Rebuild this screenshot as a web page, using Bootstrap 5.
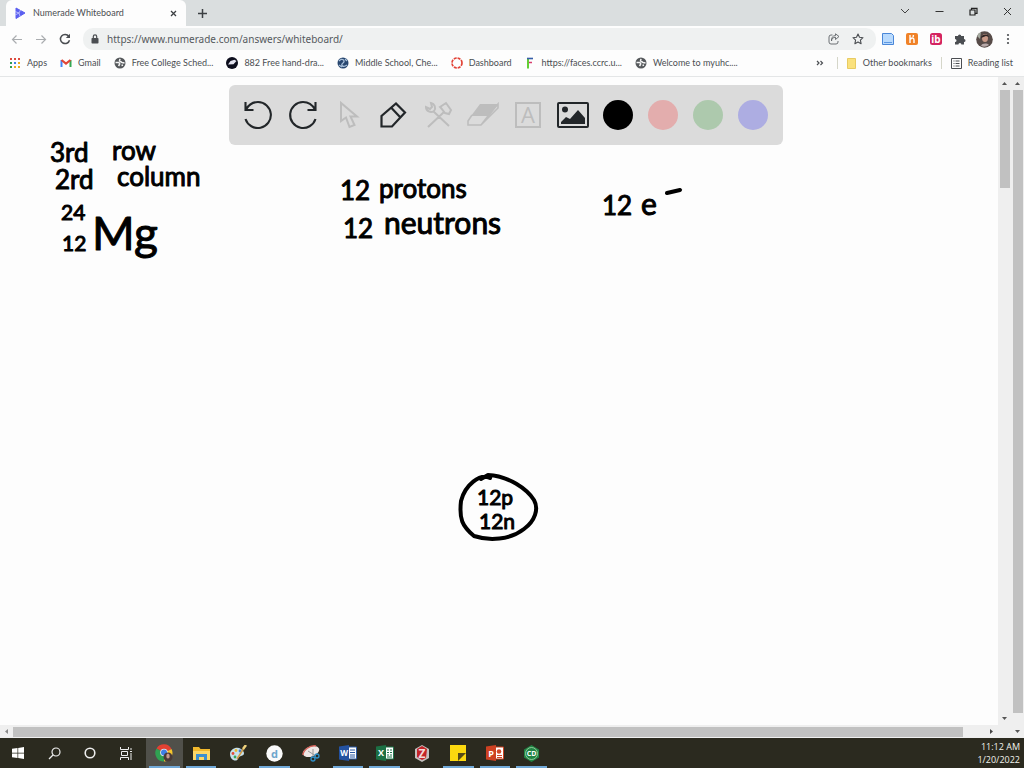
<!DOCTYPE html>
<html lang="en">
<head>
<meta charset="utf-8">
<meta name="viewport" content="width=device-width, initial-scale=1">
<title>Numerade Whiteboard</title>
<link href="https://cdn.jsdelivr.net/npm/bootstrap@5.3.0/dist/css/bootstrap.min.css" rel="stylesheet">
<style>
body{font-family:"Noto Sans","Open Sans",sans-serif;font-size:9px;line-height:12px;color:#4b4e52;background:#fdfdfd;overflow:hidden}
button{border:0;background:none;padding:0;color:inherit;display:inline-flex;align-items:center;justify-content:center}
svg{display:block;flex:none}
.tabstrip{height:26px;background:#dadedf}
.page-tab{width:180px;margin-left:6px;padding:0 8px;background:#fdfdfd;border-radius:6px 6px 0 0}
.page-tab span{font-family:Lato,sans-serif;margin-left:7px}
.win-btn{width:34px}
.new-tab{width:32px}
.addressbar{height:26px;padding:0 4px 0 5px}
.tool-btn{width:24px;height:24px}
.urlbox{background:#eff1f1;border-radius:10px;height:22px;padding:0 6px 0 8px;margin-left:6px}
.urlbox input{font-family:"Noto Sans",sans-serif;font-size:10px;line-height:16px;color:#55595d;background:none;border:0;outline:0;padding:0;min-width:0}
.bookmarks{height:25px;padding:0 11px 2px 9px;gap:13px;border-bottom:1px solid #e4e6e7}
.bookmarks a{color:#4b4e52;text-decoration:none;display:flex;align-items:center;gap:6px;white-space:nowrap;font-family:Lato,sans-serif}
.bookmark-end{gap:9px}
.divide{width:1px;height:12px;background:#d5d6c9}
.board{min-height:0}
.palette{top:8px;left:50%;translate:-50% 0;width:554px;height:60px;padding:0 7px;background:#dbdbdb;border-radius:6px;color:#222629}
.palette button{flex:1 1 0;height:60px}
.palette .off{color:#bdbdbd}
.swatch{width:30px;height:30px;border-radius:50%}
.ink text{font-family:Lato,sans-serif;font-size:26px;fill:#000;stroke:#000;stroke-width:1;stroke-linejoin:round}
.ink .note{font-size:21px}
.ink .wide{font-size:30px}
.ink .symbol{font-size:46px}
.vbar{width:13px;background:#efefef;color:#555}
.vbar i{width:10px;background:#c1c1c1}
.hbar{height:13px;background:#efefef;color:#555}
.hbar i{height:10px;background:#c1c1c1}
.arrow{width:13px;height:13px;flex:none}
.taskbar{height:30px;background:#2b2a1f;color:#fff;line-height:13px}
.sys button{width:36px;height:30px}
.apps{width:404px;margin-left:2px}
.apps button{flex:1 1 0;height:30px;position:relative}
.apps .open::after{content:"";position:absolute;left:3px;right:3px;bottom:0;height:2px;background:#71a9d8}
.apps .active{background:#50504a}
.apps text{font-family:"Open Sans",sans-serif;font-weight:700}
.clock{font-family:"Open Sans",sans-serif;font-size:9px;color:#f2f2ec}
</style>
</head>
<body class="d-flex flex-column vh-100">
<svg width="0" height="0" class="position-absolute" aria-hidden="true">
 <symbol id="globe" viewBox="0 0 12 12"><circle cx="6" cy="6" r="5.500" fill="#55585b"/><path d="M1.500 5.500H4c1.500 0 2 1 1.500 2L4.500 9M6 1.800 5.500 4 8 5.500l2.500.5M7.500 8.500 9 8" stroke="#f4f4f4" stroke-width="1.500" fill="none"/></symbol>
 <symbol id="up" viewBox="0 0 13 13"><path d="M4 8 6.500 5 9 8z" fill="currentColor"/></symbol>
 <symbol id="down" viewBox="0 0 13 13"><path d="M4 5h5L6.500 8z" fill="currentColor"/></symbol>
</svg>

<header>
 <div class="tabstrip d-flex align-items-stretch">
  <div class="page-tab d-flex align-items-center">
   <svg width="12" height="12" viewBox="0 0 12 12"><path d="M2 1 11 6 2 11.500z" fill="#5a5ff0" stroke="#5a5ff0" stroke-linejoin="round"/><path d="M1 4.500 5 6 6.500 3M5 6l1 3.500M5 6l-4 2" stroke="#c9cbff" stroke-width=".8" fill="none"/></svg>
   <span class="flex-grow-1 text-nowrap">Numerade Whiteboard</span>
   <button aria-label="Close tab"><svg width="9" height="9" viewBox="0 0 9 9"><path d="M2 2l5 5M7 2 2 7" stroke="#3c4043" stroke-width="1.300"/></svg></button>
  </div>
  <button class="new-tab" aria-label="New tab"><svg width="11" height="11" viewBox="0 0 11 11"><path d="M5.500 1v9M1 5.500h9" stroke="#3c4043" stroke-width="1.500"/></svg></button>
  <div class="ms-auto d-flex pb-1">
   <button class="win-btn" aria-label="Search tabs"><svg width="10" height="8" viewBox="0 0 10 8"><path d="M1 2l4 4 4-4" stroke="#444" fill="none"/></svg></button>
   <button class="win-btn" aria-label="Minimize"><svg width="9" height="9" viewBox="0 0 9 9"><path d="M.5 4.500h8" stroke="#333"/></svg></button>
   <button class="win-btn" aria-label="Restore"><svg width="9" height="9" viewBox="0 0 9 9"><path d="M1 3h5v5H1zM2.500 3V1.300H8v5H6" stroke="#222" fill="none" stroke-width="1.200"/></svg></button>
   <button class="win-btn" aria-label="Close"><svg width="9" height="9" viewBox="0 0 9 9"><path d="M1 1l7 7M8 1 1 8" stroke="#333"/></svg></button>
  </div>
 </div>

 <div class="addressbar d-flex align-items-center">
  <button class="tool-btn" aria-label="Back"><svg width="12" height="11" viewBox="0 0 12 11"><path d="M11 5.500H1.500M5.500 1.500l-4 4 4 4" stroke="#aaadb0" fill="none" stroke-width="1.200"/></svg></button>
  <button class="tool-btn" aria-label="Forward"><svg width="12" height="11" viewBox="0 0 12 11"><path d="M1 5.500h9.500M6.500 1.500l4 4-4 4" stroke="#aaadb0" fill="none" stroke-width="1.200"/></svg></button>
  <button class="tool-btn" aria-label="Reload"><svg width="12" height="12" viewBox="0 0 12 12"><path d="M9.800 3.300A4.600 4.600 0 1 0 10.500 7.200" stroke="#4b4e52" fill="none" stroke-width="1.500"/><path d="M11 .8V5H6.800z" fill="#4b4e52"/></svg></button>
  <div class="urlbox d-flex align-items-center flex-grow-1">
   <svg width="8" height="10" viewBox="0 0 8 10"><rect x=".5" y="4" width="7" height="5.500" rx=".8" fill="#4b4e52"/><path d="M2.300 4V2.500a1.700 1.700 0 0 1 3.400 0V4" stroke="#4b4e52" fill="none" stroke-width="1.200"/></svg>
   <input class="flex-grow-1 ms-2" type="text" aria-label="Address" value="https://www.numerade.com/answers/whiteboard/">
   <button class="tool-btn" aria-label="Share"><svg width="12" height="12" viewBox="0 0 12 12"><path d="M4.500 2H3a2 2 0 0 0-2 2v5a2 2 0 0 0 2 2h5a2 2 0 0 0 2-2V8M3.500 8c.3-2.500 1.700-3.700 4-3.800V6.500L11 3.500 7.500.8v1.700C4.500 2.700 3.200 5 3.500 8z" stroke="#5f6368" fill="none" stroke-width=".9"/></svg></button>
   <button class="tool-btn" aria-label="Bookmark"><svg width="12" height="12" viewBox="0 0 12 12"><path d="M6 1l1.500 3.300 3.500.4-2.600 2.400.7 3.600L6 8.900l-3.100 1.800.7-3.600L1 4.700l3.500-.4z" stroke="#4b4e52" fill="none" stroke-width="1.100" stroke-linejoin="round"/></svg></button>
  </div>
  <div class="d-flex">
   <button class="tool-btn" aria-label="Docs"><svg width="12" height="12" viewBox="0 0 12 12"><path d="M.5.500h9l2 2v9H.5z" fill="#b9dafd" stroke="#4a87d8"/><path d="M2 9.500h8" stroke="#5d98e3"/></svg></button>
   <button class="tool-btn" aria-label="Honey"><svg width="12" height="12" viewBox="0 0 12 12"><rect width="12" height="12" rx="2" fill="#f08228"/><path d="M4 2v8M4.500 6.500C5 4.500 8 4.500 8 7v3M7.500 2 7 4" stroke="#fff" stroke-width="1.400" fill="none"/></svg></button>
   <button class="tool-btn" aria-label="ib"><svg width="12" height="12" viewBox="0 0 12 12"><rect width="12" height="12" rx="2.500" fill="#d42460"/><text x="6" y="9.500" text-anchor="middle" font-size="10" font-weight="700" fill="#fff">ib</text></svg></button>
   <button class="tool-btn" aria-label="Extensions"><svg width="12" height="12" viewBox="0 0 12 12"><path d="M1 3h3a1.600 1.600 0 0 1 3.200 0H10v3a1.500 1.500 0 0 1 0 3v2.500H7.400a1.500 1.500 0 0 0-3 0H1V9a1.500 1.500 0 0 0 0-3z" fill="#4b4e52"/></svg></button>
   <button class="tool-btn" aria-label="Profile"><svg width="17" height="17" viewBox="0 0 17 17"><circle cx="8.500" cy="8.500" r="8.300" fill="#574b48"/><path d="M1 5a8 8 0 0 1 4-4L4 8z" fill="#a5aaa0"/><ellipse cx="9" cy="7" rx="3" ry="4" fill="#c99a88"/><path d="M5 7c0-4 7-5 8-1l-3-1z" fill="#2f2524"/><path d="M5 15c1-3 6-3 8-1a8 8 0 0 1-8 1z" fill="#b7a8a8"/></svg></button>
   <button class="tool-btn" aria-label="Menu"><svg width="4" height="12" viewBox="0 0 4 12" fill="#4b4e52"><circle cx="2" cy="2" r="1.100"/><circle cx="2" cy="6" r="1.100"/><circle cx="2" cy="10" r="1.100"/></svg></button>
  </div>
 </div>

 <nav class="bookmarks d-flex align-items-center" aria-label="Bookmarks">
  <a href="#"><svg width="12" height="12" viewBox="0 0 12 12"><g fill="#dd4b3e"><path d="M1 1h2v2H1zM5 1h2v2H5zM9 1h2v2H9z"/></g><path d="M1 5h2v2H1zM1 9h2v2H1z" fill="#2f9e53"/><path d="M5 5h2v2H5z" fill="#3f7ee8"/><path d="M9 5h2v2H9zM9 9h2v2H9zM5 9h2v2H5z" fill="#e9ad22"/></svg>Apps</a>
  <a href="#"><svg width="12" height="10" viewBox="0 0 12 10"><path d="M1.500 9V2" stroke="#4285f4" stroke-width="2"/><path d="M10.500 9V2" stroke="#34a853" stroke-width="2"/><path d="M1.500 2 6 5.500 10.500 2" stroke="#e04437" stroke-width="2.200" fill="none"/></svg>Gmail</a>
  <a href="#"><svg width="12" height="12"><use href="#globe"/></svg>Free College Sched...</a>
  <a href="#"><svg width="12" height="12" viewBox="0 0 12 12"><circle cx="6" cy="6" r="6" fill="#0c0d1c"/><path d="M2 7.500 4.500 4l4-1.200 2 1.200-3 3.300z" fill="#e3e3ef"/></svg>882 Free hand-dra...</a>
  <a href="#"><svg width="12" height="12" viewBox="0 0 12 12"><circle cx="6" cy="6" r="5.500" fill="#28466f"/><path d="M2 4c3-4 7 0 4 2s0 5 4 2M2 8l3 2M8 2l2 2" stroke="#a9c0da" fill="none" stroke-width="1.300"/></svg>Middle School, Che...</a>
  <a href="#"><svg width="12" height="12" viewBox="0 0 12 12"><circle cx="6" cy="6" r="5" fill="none" stroke="#e24236" stroke-width="1.700" stroke-dasharray="3 .93"/></svg>Dashboard</a>
  <a href="#"><svg width="11" height="12" viewBox="0 0 11 12"><path d="M3 1.500v10" stroke="#62cf35" stroke-width="2"/><path d="M2 1.500h6" stroke="#355da8" stroke-width="1.600"/><path d="M4 5.500h3" stroke="#d83d6e" stroke-width="1.500"/></svg>https://faces.ccrc.u...</a>
  <a href="#"><svg width="12" height="12"><use href="#globe"/></svg>Welcome to myuhc....</a>
  <div class="bookmark-end ms-auto d-flex align-items-center">
   <button class="me-1" aria-label="More bookmarks"><svg width="8" height="6" viewBox="0 0 8 6"><path d="M1 1l2 2-2 2M4.500 1l2 2-2 2" stroke="#4b4e52" stroke-width="1.200" fill="none"/></svg></button>
   <span class="divide"></span>
   <a href="#"><svg width="10" height="11" viewBox="0 0 10 11"><path d="M.5.500h8v10h-8z" fill="#fae17d" stroke="#e8cb62"/></svg>Other bookmarks</a>
   <span class="divide"></span>
   <a href="#"><svg width="11" height="11" viewBox="0 0 11 11"><path d="M.5.500h10v10H.5zM2.500 3h1M2.500 5.500h1M2.500 8h1M4.500 3h4M4.500 5.500h4M4.500 8h4" fill="none" stroke="#4b4e52"/></svg>Reading list</a>
  </div>
 </nav>
</header>

<main class="board d-flex flex-grow-1">
 <div class="position-relative d-flex flex-column flex-grow-1">
  <div class="d-flex flex-grow-1 board">
   <svg class="ink flex-grow-1 flex-shrink-1 h-100" role="img" aria-label="Whiteboard">
    <text><tspan x="50" y="85">3rd</tspan><tspan x="112" y="83">row</tspan></text>
    <text><tspan x="55" y="112">2rd</tspan><tspan x="117" y="109">column</tspan></text>
    <text class="note" x="61" y="143">24</text><text class="note" x="62" y="174">12</text>
    <text class="symbol" x="92" y="173">Mg</text>
    <text x="340" y="123">12</text><text x="379" y="121">protons</text>
    <text x="343" y="161">12</text><text class="wide" x="384" y="157">neutrons</text>
    <text x="602" y="138">12</text><text class="wide" x="641" y="138">e</text>
    <path d="M667 116 680 113" stroke="#000" stroke-width="4" stroke-linecap="round"/>
    <text class="note" x="477" y="428">12p</text><text class="note" x="479" y="452">12n</text>
    <path d="M490 401C480 396 465 408 461 424C459 442 462 449 474 459C489 464 510 463 524 452C535 444 539 432 534 423C527 412 509 399 488 398L481 402" fill="none" stroke="#000" stroke-width="4" stroke-linecap="round" stroke-linejoin="round"/>
   </svg>
   <div class="vbar d-flex flex-column align-items-center"><svg class="arrow"><use href="#up"/></svg><i style="height:15.1%"></i><svg class="arrow mt-auto"><use href="#down"/></svg></div>
  </div>
  <div class="hbar d-flex align-items-center">
   <svg class="arrow" viewBox="0 0 13 13"><path d="M8 4v5L5 6.500z" fill="#888"/></svg>
   <i style="width:94%"></i>
   <svg class="arrow ms-auto" viewBox="0 0 13 13"><path d="M5 4v5l3-2.500z" fill="#444"/></svg>
   <span class="arrow"></span>
  </div>
  <div class="palette position-absolute d-flex align-items-center" role="toolbar" aria-label="Drawing tools">
   <button aria-label="Undo"><svg width="30" height="30" viewBox="0 0 30 30" fill="none" stroke="currentColor" stroke-width="2.100"><path d="M2.500 2v8h8M3 9.500C6 4 10 2 15 2a13 13 0 1 1-12.500 17"/></svg></button>
   <button aria-label="Redo"><svg width="30" height="30" viewBox="0 0 30 30" fill="none" stroke="currentColor" stroke-width="2.100"><path d="M27.500 2v8h-8M27 9.500C24 4 20 2 15 2a13 13 0 1 0 12.500 17"/></svg></button>
   <button class="off" aria-label="Select"><svg width="30" height="30" viewBox="0 0 30 30" fill="none" stroke="currentColor" stroke-width="2"><path d="M8 3v18l5-3.500L16.500 27l5-2-4-8.500H24z"/></svg></button>
   <button aria-label="Pen"><svg width="30" height="30" viewBox="0 0 30 30" fill="none" stroke="currentColor" stroke-width="2.200"><path d="M3.500 26.500V16L18 3.500l9 9-13 14zM13.500 8l8.500 9"/></svg></button>
   <button class="off" aria-label="Tools"><svg width="30" height="30" viewBox="0 0 30 30" fill="none" stroke="currentColor" stroke-width="2"><path d="M5 27 21 12M26 26 10 11M3 7a5 5 0 0 0 8 4 5 5 0 0 0-3-8l1 4-2 2zM17 7l6-4 5 7-2 4-4-1-4-5z"/></svg></button>
   <button class="off" aria-label="Eraser"><svg width="34" height="26" viewBox="0 0 34 26"><path d="M14 2h18L23 14H5z" fill="currentColor"/><path d="M6 13 2 19v4h13l7-9M22 14 32 2v4L15 23" fill="none" stroke="currentColor" stroke-width="1.600"/></svg></button>
   <button class="off" aria-label="Text"><svg width="32" height="36" viewBox="0 0 32 36"><path d="M4 6h24v24H4z" fill="none" stroke="currentColor" stroke-width="2"/><text x="16" y="26" text-anchor="middle" font-family="Open Sans" font-size="22" fill="currentColor">A</text></svg></button>
   <button aria-label="Image"><svg width="32" height="26" viewBox="0 0 32 26"><rect x="1" y="1" width="30" height="24" rx="1" fill="none" stroke="currentColor" stroke-width="2"/><circle cx="8" cy="7.500" r="3" fill="currentColor"/><path d="M4 22v-2l5-5 4 2 8-9 7 8v6z" fill="currentColor"/></svg></button>
   <button aria-label="Black"><span class="swatch" style="background:#000"></span></button>
   <button aria-label="Red"><span class="swatch" style="background:#e3adad"></span></button>
   <button aria-label="Green"><span class="swatch" style="background:#adc9ad"></span></button>
   <button aria-label="Blue"><span class="swatch" style="background:#adade2"></span></button>
  </div>
 </div>
 <div class="vbar d-flex flex-column align-items-center"><svg class="arrow"><use href="#up"/></svg><i class="flex-grow-1 mb-2"></i><svg class="arrow mt-1"><use href="#down"/></svg></div>
</main>

<footer class="taskbar d-flex align-items-center">
 <div class="sys d-flex">
  <button aria-label="Start"><svg width="12" height="12" viewBox="0 0 12 12" fill="#fff"><path d="M0 1.700 5.500 1v4.700H0zM6.200.900 12 0v5.700H6.200zM0 6.400h5.500V11L0 10.300zM6.200 6.400H12V12l-5.800-.9z"/></svg></button>
  <button aria-label="Search"><svg width="13" height="13" viewBox="0 0 13 13" fill="none" stroke="#eee" stroke-width="1.200"><circle cx="8" cy="5" r="4"/><path d="M5 8 1 12"/></svg></button>
  <button aria-label="Cortana"><svg width="12" height="12" viewBox="0 0 12 12"><circle cx="6" cy="6" r="4.800" fill="none" stroke="#eee" stroke-width="1.600"/></svg></button>
  <button aria-label="Task view"><svg width="13" height="13" viewBox="0 0 13 13" fill="none" stroke="#eee"><path d="M.5 0v2.500h8V0M1.500 4.500h6v4h-6zM.5 13v-2.500h8V13M11 1v2M11 6v7M10 4.500h2"/></svg></button>
 </div>
 <div class="apps d-flex">
  <button class="active open" aria-label="Chrome"><svg width="18" height="18" viewBox="0 0 18 18"><path d="M9 9 1.600 4.500A8.500 8.500 0 0 1 16.500 5z" fill="#e34133"/><path d="M9 9 1.600 4.500A8.500 8.500 0 0 0 9 17.500z" fill="#30a152"/><path d="M9 9l7.500-4A8.500 8.500 0 0 1 9 17.500z" fill="#f6c62c"/><circle cx="9" cy="8.500" r="3.800" fill="#eee"/><circle cx="9" cy="8.500" r="3" fill="#3e80e5"/><circle cx="13" cy="13" r="4.500" fill="#4b3a37"/><ellipse cx="13" cy="12" rx="1.700" ry="2.500" fill="#c99c8c"/></svg></button>
  <button class="open" aria-label="File Explorer"><svg width="17" height="15" viewBox="0 0 17 15"><path d="M0 1h6l1.500 2H17v11H0z" fill="#f2b92c"/><path d="M0 5h17v9H0z" fill="#fbd768"/><path d="M3 8h11v6h-3v-3H6v3H3z" fill="#3b8fd0"/></svg></button>
  <button aria-label="Paint"><svg width="18" height="17" viewBox="0 0 18 17"><path d="M1 9C1 4 8 1 12 4s4 6 0 7-2 4-5 4.500S1 13 1 9z" fill="#c7e0ea"/><circle cx="4" cy="8.500" r="1.400" fill="#e44b37"/><circle cx="7" cy="5.500" r="1.400" fill="#e9b931"/><circle cx="11" cy="6" r="1.400" fill="#3f7fd1"/><circle cx="6" cy="12" r="1.400" fill="#36a559"/><path d="M8 14 15 3" stroke="#d19a45" stroke-width="1.500"/><path d="M14 4 17 0" stroke="#efd27d" stroke-width="2.500"/></svg></button>
  <button class="open" aria-label="Duet"><svg width="17" height="17" viewBox="0 0 17 17"><circle cx="8.500" cy="8.500" r="8.200" fill="#fafafa"/><text x="8.500" y="12.500" text-anchor="middle" font-size="11" fill="#6ca5cc">d</text></svg></button>
  <button aria-label="Snip"><svg width="18" height="17" viewBox="0 0 18 17"><ellipse cx="9" cy="6.500" rx="8.500" ry="5" fill="#eee6e5" transform="rotate(-20 9 6.500)"/><path d="M1 10C1 5 8 0 14 1" stroke="#d5635a" stroke-width="1.500" fill="none"/><path d="M6 6l8 5M11 4v7" stroke="#999"/><circle cx="15" cy="11" r="2" fill="none" stroke="#2f8fc8" stroke-width="1.300"/><circle cx="11" cy="14" r="2" fill="none" stroke="#2f8fc8" stroke-width="1.300"/></svg></button>
  <button class="open" aria-label="Word"><svg width="18" height="16" viewBox="0 0 18 16"><path d="M9 2h8.500v12H9z" fill="#fff" stroke="#2c5aa5"/><path d="M11 5h5M11 7.500h5M11 10h5M11 12h5" stroke="#2c5aa5"/><path d="M0 1.500 10 0v16L0 14.500z" fill="#2452a0"/><text x="5" y="11" text-anchor="middle" font-size="8" fill="#fff">W</text></svg></button>
  <button class="open" aria-label="Excel"><svg width="18" height="16" viewBox="0 0 18 16"><path d="M9 2h8.500v12H9z" fill="#fff" stroke="#20744a"/><path d="M11 5h2M14 5h2M11 7.500h2M14 7.500h2M11 10h2M14 10h2M11 12h5" stroke="#20744a"/><path d="M0 1.500 10 0v16L0 14.500z" fill="#1c7044"/><text x="5" y="11" text-anchor="middle" font-size="9" fill="#fff">X</text></svg></button>
  <button aria-label="Zotero"><svg width="16" height="17" viewBox="0 0 16 17"><path d="M8 0l7 4v9l-7 4-7-4V4z" fill="#c4c0be"/><path d="M3 4 8 1l5 3-1 9-4 2-5-3z" fill="#c32428"/><text x="8" y="13" text-anchor="middle" font-size="12" fill="#f3dada">Z</text></svg></button>
  <button class="open" aria-label="Sticky Notes"><svg width="16" height="16" viewBox="0 0 16 16"><path d="M0 0h16v16H0z" fill="#fbd80f"/><path d="M8 8h8l-8 8z" fill="#554a18"/></svg></button>
  <button class="open" aria-label="PowerPoint"><svg width="18" height="16" viewBox="0 0 18 16"><path d="M9 2h8.500v12H9z" fill="#fff" stroke="#c8401f"/><circle cx="13" cy="6.500" r="2.300" fill="#d24726"/><path d="M11 10.500h5M11 12.500h5" stroke="#d24726"/><path d="M0 1.500 10 0v16L0 14.500z" fill="#cd4122"/><text x="5" y="11.500" text-anchor="middle" font-size="9" fill="#fff">P</text></svg></button>
  <button class="open" aria-label="CD"><svg width="17" height="17" viewBox="0 0 17 17"><path d="M8.500 0 16 4.500v8L8.500 17 1 12.500v-8z" fill="#218444"/><circle cx="8.500" cy="8.500" r="6" fill="none" stroke="#a9d8ad" stroke-width=".8"/><text x="8.500" y="11" text-anchor="middle" font-size="7" fill="#fff">CD</text></svg></button>
 </div>
 <div class="clock ms-auto pe-1 text-end"><div>11:12 AM</div><div>1/20/2022</div></div>
</footer>
<script src="https://cdn.jsdelivr.net/npm/bootstrap@5.3.0/dist/js/bootstrap.bundle.min.js"></script>
</body>
</html>
